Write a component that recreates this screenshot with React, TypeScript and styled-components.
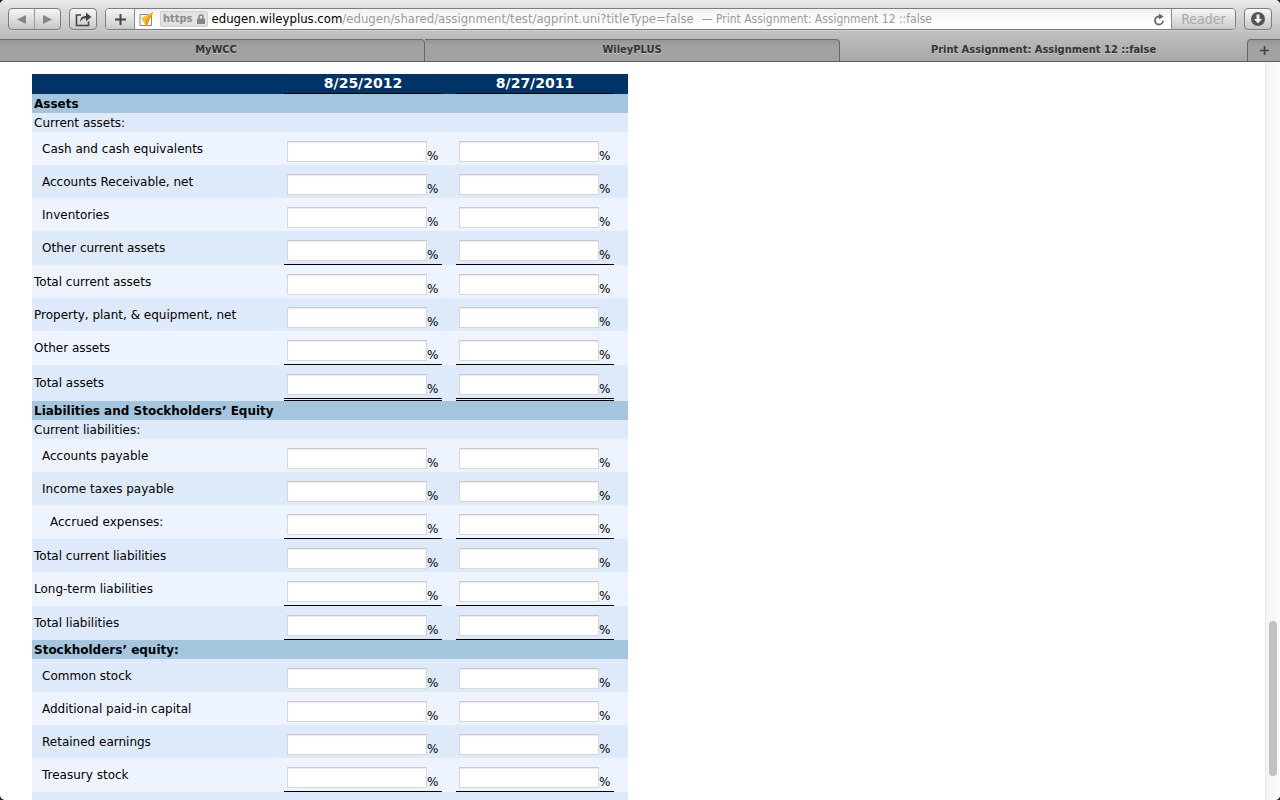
import React from "react";
import styled, { createGlobalStyle } from "styled-components";

const GlobalStyle = createGlobalStyle`
  * { box-sizing: border-box; }
  body { margin: 0; background: #1c1f26; overflow: hidden; }
`;

const chromeFont = `"DejaVu Sans Condensed", "Lucida Grande", "Noto Sans", sans-serif`;
const pageFont = `"DejaVu Sans", Verdana, sans-serif`;

const Window = styled.div`
  display: flex;
  flex-direction: column;
  height: 100vh;
  overflow: hidden;
  background: #fff;
  border-radius: 5px;
`;

const Chrome = styled.header`
  flex: none;
  background: linear-gradient(#ececec 0, #dcdcdc 10px, #b8b8b8 40px, #a8a8a8 61px);
  font-family: ${chromeFont};
`;

const Toolbar = styled.div`
  display: flex;
  align-items: flex-start;
  height: 39px;
  padding: 8px 8px 0;
`;

const ButtonGroup = styled.div`
  display: flex;
  height: 22px;
  width: 53px;
  margin-right: 8px;
  border: 1px solid #7d7d7d;
  border-radius: 4px;
  background: linear-gradient(#f6f6f6, #c6c6c6);
  box-shadow: 0 1px 0 #d0d0d0;
`;

const IconButton = styled.button<{ $divided?: boolean }>`
  display: flex;
  flex: 1;
  align-items: center;
  justify-content: center;
  padding: 0;
  border: 0;
  border-right: ${(p) => (p.$divided ? "1px solid #9a9a9a" : "0")};
  background: none;
`;

const SoloButton = styled(IconButton)<{ $gap: number }>`
  flex: none;
  width: 28px;
  height: 22px;
  margin-right: ${(p) => p.$gap}px;
  border: 1px solid #7d7d7d;
  border-radius: 4px;
  background: linear-gradient(#f8f8f8, #c6c6c6);
  box-shadow: 0 1px 0 #d0d0d0;
`;

const AddressBar = styled.div`
  display: flex;
  flex: 1;
  min-width: 0;
  height: 22px;
  margin-right: 8px;
  border: 1px solid #7d7d7d;
  border-radius: 4px;
  background: linear-gradient(#f1f1f1, #fff 14px);
  box-shadow: 0 1px 0 #d0d0d0;
  overflow: hidden;
`;

const BarButton = styled.button<{ $side: "left" | "right" }>`
  display: flex;
  flex: none;
  align-items: center;
  justify-content: center;
  width: ${(p) => (p.$side === "left" ? 29 : 64)}px;
  padding: 0;
  border: 0;
  border-${(p) => (p.$side === "left" ? "right" : "left")}: 1px solid #8c8c8c;
  background: linear-gradient(#f6f6f6, #cacaca);
  color: #a9a9a9;
  font: 14px/20px ${chromeFont};
`;

const Address = styled.div`
  display: flex;
  flex: 1;
  min-width: 0;
  align-items: center;
  padding-left: 4px;
  white-space: nowrap;
  color: #9a9a9a;
  font-size: 13px;
  line-height: 20px;
`;

const Secure = styled.span`
  display: flex;
  align-items: center;
  gap: 4px;
  height: 16px;
  margin: 0 4px 0 6px;
  padding: 0 2px;
  border: 1px solid #cfcfcf;
  border-radius: 2px;
  background: #e2e2e2;
  color: #8b8b8b;
  font-size: 11px;
  font-weight: 700;
`;

const Domain = styled.span`
  color: #000;
`;

const PageTitle = styled.span`
  margin-left: 8px;
  font-size: 12px;
`;

const ReloadButton = styled.button`
  display: flex;
  margin-left: auto;
  padding: 0 6px;
  border: 0;
  background: none;
`;

const TabBar = styled.nav`
  display: flex;
  height: 23px;
  border-bottom: 1px solid #5f5f5f;
`;

const Tab = styled.a<{ $active?: boolean; $extra: number }>`
  flex: 1 1 ${(p) => p.$extra}px;
  min-width: 0;
  border-top: 1px solid ${(p) => (p.$active ? "transparent" : "#6d6d6d")};
  border-right: ${(p) => (p.$active ? "0" : "1px solid #666")};
  border-radius: 0 4px 0 0;
  background: ${(p) => (p.$active ? "none" : "linear-gradient(#959595, #a2a2a2 6px)")};
  color: #333;
  font-size: 11px;
  font-weight: 700;
  line-height: 20px;
  text-align: center;
  text-decoration: none;
  text-shadow: 0 1px 0 #c4c4c4;

  &:first-child {
    padding-left: 8px;
  }
`;

const NewTab = styled.button`
  display: flex;
  flex: none;
  align-items: center;
  justify-content: center;
  width: 33px;
  padding: 0;
  border: 0;
  border-top: 1px solid #6d6d6d;
  border-left: 1px solid #666;
  border-radius: 4px 0 0 0;
  background: linear-gradient(#959595, #a2a2a2 6px);
`;

const Viewport = styled.div`
  display: flex;
  flex: 1;
  min-height: 0;
`;

const Page = styled.main`
  flex: 1;
  min-width: 0;
  overflow: hidden;
  padding: 12px 32px 0;
`;

const Scrollbar = styled.div`
  display: flex;
  flex-direction: column;
  justify-content: flex-end;
  flex: none;
  width: 15px;
  padding: 0 3px 24px;
  border-left: 1px solid #e6e6e6;
  background: linear-gradient(90deg, #f4f4f4, #fcfcfc);
`;

const Thumb = styled.div`
  width: 8px;
  height: 155px;
  border-radius: 4px;
  background: #c1c1c1;
`;

const Sheet = styled.table`
  width: 596px;
  border-collapse: separate;
  border-spacing: 0;
  table-layout: fixed;
  color: #000;
  font: 12px/16px ${pageFont};
`;

const LabelCol = styled.col`
  width: 252px;
`;
const FieldCol = styled.col`
  width: 158px;
`;
const GapCol = styled.col`
  width: 14px;
`;

const HeadRow = styled.tr`
  height: 20px;
  background: #003366;
  color: #fff;
`;

const HeadCell = styled.th<{ $ruled?: boolean }>`
  height: 20px;
  padding: 0;
  border-bottom: ${(p) => (p.$ruled ? "1px solid #000" : "0")};
  font-size: 14px;
  line-height: 19px;
`;

const tones = { section: "#a3c5de", dark: "#dee9f9", light: "#edf4ff" };
type Tone = keyof typeof tones;

const Row = styled.tr<{ $tone: Tone }>`
  background: ${(p) => tones[p.$tone]};
`;

const HeadingCell = styled.th<{ $bold: boolean }>`
  height: 19px;
  padding: 2px 2px 1px;
  font-weight: ${(p) => (p.$bold ? 700 : 400)};
  text-align: left;
`;

const LabelCell = styled.th<{ $indent: number }>`
  padding: 0 2px 0 ${(p) => 2 + p.$indent * 8}px;
  font-weight: 400;
  text-align: left;
`;

type Rule = "none" | "single" | "double";
const rules: Record<Rule, string> = {
  none: "0",
  single: "1px solid #000",
  double: "3px double #000",
};

const FieldCell = styled.td<{ $rule: Rule }>`
  padding: 0;
  border-bottom: ${(p) => rules[p.$rule]};
`;

const GapCell = styled.td`
  padding: 0;
`;

const Field = styled.div`
  display: flex;
  align-items: flex-end;
  height: 33px;
  padding: 0 2px 1px 3px;
`;

const Amount = styled.input`
  width: 140px;
  height: 21px;
  margin: 0 0 2px;
  padding: 0 3px;
  border: 1px solid #d8d8d8;
  border-top-color: #cacaca;
  border-radius: 0;
  background: #fff;
  box-shadow: inset 0 1px 1px #ececec;
  font: 12px/16px ${pageFont};
  outline: none;
`;

type Line =
  | { kind: "section" | "heading"; label: string }
  | { kind: "item"; label: string; tone: Tone; indent?: number; rule?: Rule };

const lines: Line[] = [
  { kind: "section", label: "Assets" },
  { kind: "heading", label: "Current assets:" },
  { kind: "item", label: "Cash and cash equivalents", tone: "light", indent: 1 },
  { kind: "item", label: "Accounts Receivable, net", tone: "dark", indent: 1 },
  { kind: "item", label: "Inventories", tone: "light", indent: 1 },
  { kind: "item", label: "Other current assets", tone: "dark", indent: 1, rule: "single" },
  { kind: "item", label: "Total current assets", tone: "light" },
  { kind: "item", label: "Property, plant, & equipment, net", tone: "dark" },
  { kind: "item", label: "Other assets", tone: "light", rule: "single" },
  { kind: "item", label: "Total assets", tone: "dark", rule: "double" },
  { kind: "section", label: "Liabilities and Stockholders’ Equity" },
  { kind: "heading", label: "Current liabilities:" },
  { kind: "item", label: "Accounts payable", tone: "light", indent: 1 },
  { kind: "item", label: "Income taxes payable", tone: "dark", indent: 1 },
  { kind: "item", label: "Accrued expenses:", tone: "light", indent: 2, rule: "single" },
  { kind: "item", label: "Total current liabilities", tone: "dark" },
  { kind: "item", label: "Long-term liabilities", tone: "light", rule: "single" },
  { kind: "item", label: "Total liabilities", tone: "dark", rule: "single" },
  { kind: "section", label: "Stockholders’ equity:" },
  { kind: "item", label: "Common stock", tone: "dark", indent: 1 },
  { kind: "item", label: "Additional paid-in capital", tone: "light", indent: 1 },
  { kind: "item", label: "Retained earnings", tone: "dark", indent: 1 },
  { kind: "item", label: "Treasury stock", tone: "light", indent: 1, rule: "single" },
];

const dates = ["8/25/2012", "8/27/2011"];

function SheetLine({ line }: { line: Line }) {
  if (line.kind !== "item") {
    const isSection = line.kind === "section";
    return (
      <Row $tone={isSection ? "section" : "dark"}>
        <HeadingCell $bold={isSection} colSpan={5}>{line.label}</HeadingCell>
      </Row>
    );
  }
  return (
    <Row $tone={line.tone}>
      <LabelCell scope="row" $indent={line.indent ?? 0}>{line.label}</LabelCell>
      {dates.map((date) => (
        <React.Fragment key={date}>
          <FieldCell $rule={line.rule ?? "none"}>
            <Field>
              <Amount type="text" aria-label={`${line.label} ${date}`} />%
            </Field>
          </FieldCell>
          <GapCell />
        </React.Fragment>
      ))}
    </Row>
  );
}

const Plus = ({ size, color }: { size: number; color: string }) => (
  <svg width={size} height={size} viewBox="0 0 11 11" aria-hidden="true">
    <path d="M5.5 0v11M0 5.5h11" stroke={color} strokeWidth="2" />
  </svg>
);

export default function App() {
  return (
    <>
      <GlobalStyle />
      <Window>
        <Chrome>
          <Toolbar>
            <ButtonGroup>
              <IconButton $divided aria-label="Back">
                <svg width="9" height="9" viewBox="0 0 9 9"><path d="M9 0v9L0 4.500z" fill="#858585" /></svg>
              </IconButton>
              <IconButton aria-label="Forward">
                <svg width="9" height="9" viewBox="0 0 9 9"><path d="M0 0v9l9-4.500z" fill="#858585" /></svg>
              </IconButton>
            </ButtonGroup>
            <SoloButton $gap={8} aria-label="Share">
              <svg width="17" height="15" viewBox="0 0 17 15">
                <path d="M6 3H1.500v10.500h12V9.500" fill="none" stroke="#444" strokeWidth="1.600" />
                <path d="M5 10C5 6 7.500 4 11 4V0.500L16.500 5 11 9.300V6.300C8.500 6.200 6.500 7.200 5 10z" fill="#444" />
              </svg>
            </SoloButton>
            <AddressBar>
              <BarButton $side="left" aria-label="Add bookmark"><Plus size={11} color="#444" /></BarButton>
              <Address>
                <svg width="15" height="16" viewBox="0 0 15 16" aria-hidden="true">
                  <path d="M1 3.500h11.500v11H1z" fill="#fff" stroke="#8a8a8a" />
                  <path d="M14.500 0.500L8 14 6 13.500 2 7l5.500-2.500z" fill="#fcc02c" />
                  <path d="M14.500 0.500L8 14 6 13.500 7 8.500z" fill="#f5960f" />
                </svg>
                <Secure>
                  https
                  <svg width="8" height="10" viewBox="0 0 8 10" aria-hidden="true">
                    <path d="M2 5V3a2 2 0 0 1 4 0v2" fill="none" stroke="#858585" strokeWidth="1.500" />
                    <rect y="4.500" width="8" height="5.500" rx="0.500" fill="#858585" />
                  </svg>
                </Secure>
                <Domain>edugen.wileyplus.com</Domain>
                /edugen/shared/assignment/test/agprint.uni?titleType=false
                <PageTitle>— Print Assignment: Assignment 12 ::false</PageTitle>
                <ReloadButton aria-label="Reload">
                  <svg width="12" height="13" viewBox="0 0 12 13">
                    <path d="M6.500 3.500H6A4 4 0 1 0 10 7.700" fill="none" stroke="#666" strokeWidth="1.800" />
                    <path d="M6 0.500v6l4.500-3z" fill="#666" />
                  </svg>
                </ReloadButton>
              </Address>
              <BarButton $side="right">Reader</BarButton>
            </AddressBar>
            <SoloButton $gap={0} aria-label="Downloads">
              <svg width="14" height="14" viewBox="0 0 14 14">
                <circle cx="7" cy="7" r="7" fill="#555" />
                <path d="M5.500 2.500h3V7H11l-4 4.500L3 7h2.500z" fill="#f2f2f2" />
              </svg>
            </SoloButton>
          </Toolbar>
          <TabBar>
            <Tab href="#mywcc" $extra={18}>MyWCC</Tab>
            <Tab href="#wileyplus" $extra={8}>WileyPLUS</Tab>
            <Tab href="#print" $extra={0} $active>Print Assignment: Assignment 12 ::false</Tab>
            <NewTab aria-label="New tab"><Plus size={9} color="#444" /></NewTab>
          </TabBar>
        </Chrome>
        <Viewport>
          <Page>
            <Sheet>
              <colgroup>
                <LabelCol />
                <FieldCol />
                <GapCol />
                <FieldCol />
                <GapCol />
              </colgroup>
              <thead>
                <HeadRow>
                  <HeadCell as="td" />
                  {dates.map((date) => (
                    <React.Fragment key={date}>
                      <HeadCell scope="col" $ruled>{date}</HeadCell>
                      <HeadCell as="td" />
                    </React.Fragment>
                  ))}
                </HeadRow>
              </thead>
              <tbody>
                {lines.map((line) => (
                  <SheetLine key={line.label} line={line} />
                ))}
                <Row $tone="dark">
                  <GapCell colSpan={5}><Field /></GapCell>
                </Row>
              </tbody>
            </Sheet>
          </Page>
          <Scrollbar><Thumb /></Scrollbar>
        </Viewport>
      </Window>
    </>
  );
}
